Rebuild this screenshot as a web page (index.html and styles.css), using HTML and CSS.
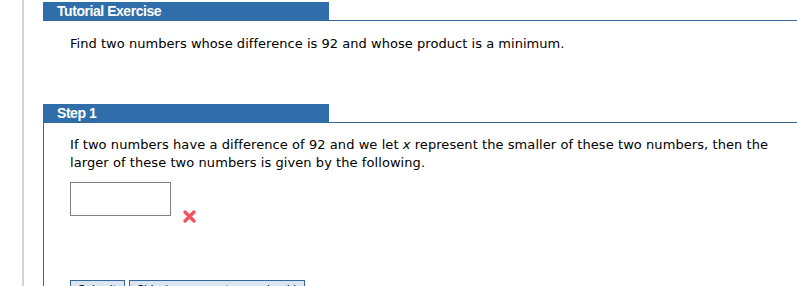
FILE: index.html
```html
<!DOCTYPE html>
<html>
<head>
<meta charset="utf-8">
<link rel="stylesheet" href="styles.css">
</head>
<body>
<div class="page">
  <div class="section">
    <div class="tabbar"><div class="tab">Tutorial Exercise</div></div>
    <div class="intro">Find two numbers whose difference is 92 and whose product is a minimum.</div>
  </div>
  <div class="section step">
    <div class="tabbar"><div class="tab">Step 1</div></div>
    <div class="stepbody">
      <p class="q">If two numbers have a difference of 92 and we let <i>x</i> represent the smaller of these two numbers, then the larger of these two numbers is given by the following.</p>
      <div class="answer">
        <div class="field"></div>
        <svg class="wrong" width="15" height="15" viewBox="0 0 15 15"><path d="M3 3 L12 12 M12 3 L3 12" stroke="#f0555e" stroke-width="3.4" stroke-linecap="round"/></svg>
      </div>
      <div class="buttons">
        <button class="btn">Submit</button>
        <button class="btn">Skip (you cannot come back)</button>
      </div>
    </div>
  </div>
</div>
</body>
</html>
```
FILE: styles.css
```css
html, body { margin: 0; padding: 0; background: #fff; }
body { font-family: "DejaVu Sans", Verdana, sans-serif; font-size: 13px; color: #000; overflow: hidden; height: 286px; }
.page { margin-left: 22px; border-left: 2px solid #d4d4d4; min-height: 286px; padding-left: 19px; padding-top: 2px; box-sizing: border-box; }
.tabbar { border-bottom: 1px solid #336699; }
.tab { width: 272px; height: 18px; line-height: 19px; background: #2f6eaa; color: #fff; font-family: "Liberation Sans", Arial, sans-serif; font-weight: bold; font-size: 14px; padding-left: 14px; letter-spacing: -0.45px; }
.intro { padding: 14px 0 0 27px; height: 69px; line-height: 18px; font-size: 13px; letter-spacing: 0.04px; }
.step .stepbody { border-left: 1px solid #336699; padding: 13px 0 0 26px; min-height: 200px; }
.q { margin: 0; line-height: 18px; font-size: 13px; padding-right: 4px; letter-spacing: 0.07px; }
.answer { display: flex; align-items: flex-start; margin-top: 10px; height: 98px; }
.field { width: 99px; height: 32px; border: 1px solid #808080; }
.wrong { margin-left: 11px; margin-top: 27px; }
.buttons { display: flex; gap: 4px; }
.btn { font-family: "DejaVu Sans", Verdana, sans-serif; font-size: 11px; line-height: 14px; background: #d9e5f0; border: 1px solid #336699; padding: 2px 7px; margin: 0; color: #000; }
```
